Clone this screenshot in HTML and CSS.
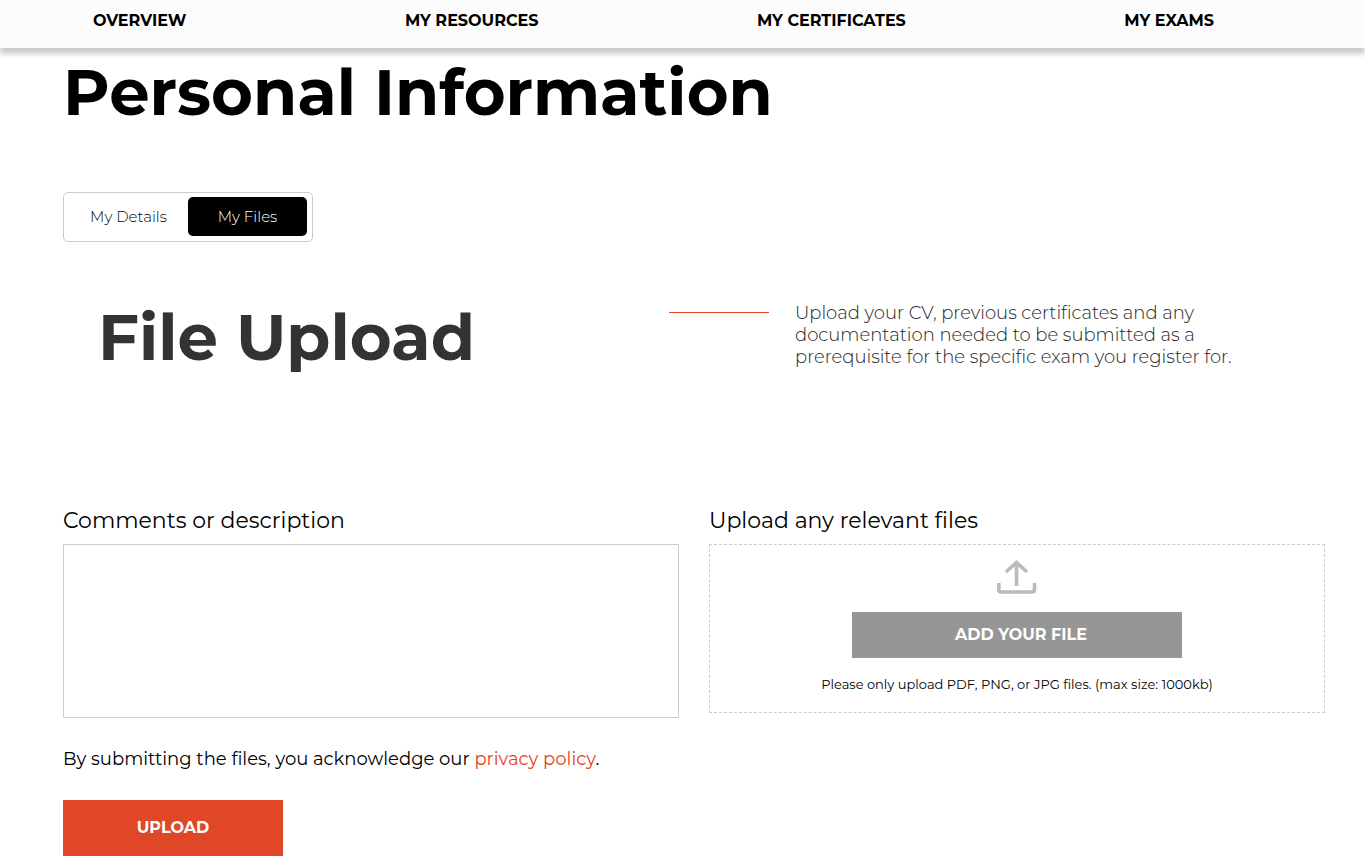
FILE: index.html
```html
<!DOCTYPE html>
<html lang="en">

<head>
  <meta charset="UTF-8">
  <meta name="viewport" content="width=device-width, initial-scale=1.0">
  <title>Personal Information</title>
  <link rel="stylesheet" href="styles.css">
</head>

<body>
  <nav class="main-nav">
    <a href="#">OVERVIEW</a>
    <a href="#">MY RESOURCES</a>
    <a href="#">MY CERTIFICATES</a>
    <a href="#">MY EXAMS</a>
  </nav>

  <main class="content">
    <h1>Personal Information</h1>

    <div class="tabs">
      <button type="button" class="tab">My Details</button>
      <button type="button" class="tab active">My Files</button>
    </div>

    <section class="intro">
      <h2>File Upload</h2>
      <div class="intro-text">
        <span class="line"></span>
        <p>Upload your CV, previous certificates and any documentation needed to be submitted as a prerequisite for the specific exam you register for.</p>
      </div>
    </section>

    <form>
      <div class="fields">
        <div class="field">
          <label for="comments">Comments or description</label>
          <textarea id="comments" name="comments"></textarea>
        </div>
        <div class="field">
          <label for="addFile">Upload any relevant files</label>
          <div class="dropzone">
            <svg class="upload-icon" width="40" height="36" viewBox="0 0 40 36" fill="none" stroke="#bbb">
              <path d="M19.5 27V3.5M9 13L19.5 3.5L30 13" stroke-width="3.6" />
              <path d="M1.8 24V30.5Q1.8 33 4.3 33H35Q37.5 33 37.5 30.5V24" stroke-width="3.6" />
            </svg>
            <button type="button" id="addFile" class="add-file">ADD YOUR FILE</button>
            <p class="hint">Please only upload PDF, PNG, or JPG files. (max size: 1000kb)</p>
          </div>
        </div>
      </div>
      <p class="policy">By submitting the files, you acknowledge our <a href="#">privacy policy</a>.</p>
      <button type="submit" class="submit">UPLOAD</button>
    </form>
  </main>
</body>

</html>
```

FILE: styles.css
```css
* {
  box-sizing: border-box;
}

body {
  margin: 0;
  background: #fff;
  color: #000;
  font-family: Montserrat, Inter, "Open Sans", sans-serif;
}

h1,
h2,
p {
  margin: 0;
}

button,
textarea {
  font-family: inherit;
}

button {
  border: 0;
  cursor: pointer;
}

.main-nav {
  display: flex;
  justify-content: space-between;
  height: 48px;
  padding: 11px 151px 0 93px;
  background: #fcfcfc;
  box-shadow: 0 6px 5px #ccc;
}

.main-nav a {
  color: #000;
  font-size: 16px;
  font-weight: 700;
  line-height: 20px;
  text-decoration: none;
}

.content {
  padding: 0 40px 7px 63px;
}

h1 {
  padding-top: 4px;
  font-size: 64px;
  line-height: 80px;
}

.tabs {
  display: inline-flex;
  width: 250px;
  height: 50px;
  margin-top: 60px;
  padding: 4px 5px 5px;
  border: 1px solid #ccc;
  border-radius: 5px;
}

.tab {
  flex: 1;
  padding: 0;
  border-radius: 5px;
  background: none;
  color: #000;
  font-size: 15px;
  font-weight: 300;
}

.tab.active {
  background: #000;
  color: #fff;
}

.intro {
  display: grid;
  grid-template-columns: 1fr 1fr;
  padding: 59px 85px 134px 35px;
}

h2 {
  color: #333;
  font-size: 64px;
  line-height: 72px;
}

.intro-text {
  display: flex;
  gap: 26px;
  padding-top: 1px;
}

.line {
  flex: none;
  width: 100px;
  height: 1px;
  margin-top: 10px;
  background: #e04726;
}

.intro-text p {
  color: #222;
  font-size: 18px;
  font-weight: 300;
  line-height: 22px;
}

.fields {
  display: grid;
  grid-template-columns: 1fr 1fr;
  gap: 30px;
}

.field label {
  display: block;
  margin-bottom: 9px;
  font-size: 22px;
  line-height: 28px;
}

.field textarea {
  display: block;
  width: 100%;
  height: 174px;
  padding: 10px;
  border: 1px solid #ccc;
  resize: none;
}

.dropzone {
  display: flex;
  flex-direction: column;
  align-items: center;
  padding: 14px 20px 18px;
  border: 1px dashed #ccc;
}

.add-file {
  width: 330px;
  height: 46px;
  margin: 17px 0 16px;
  padding: 0 0 2px 8px;
  background: #969696;
  color: #fff;
  font-size: 16px;
  font-weight: 700;
}

.hint {
  font-size: 13px;
  line-height: 20px;
}

.policy {
  margin: 30px 0;
  font-size: 18px;
  line-height: 22px;
}

.policy a {
  color: #e04726;
  text-decoration: none;
}

.submit {
  width: 220px;
  height: 56px;
  padding: 0 0 2px;
  background: #e04726;
  color: #fff;
  font-size: 16px;
  font-weight: 700;
}
```
